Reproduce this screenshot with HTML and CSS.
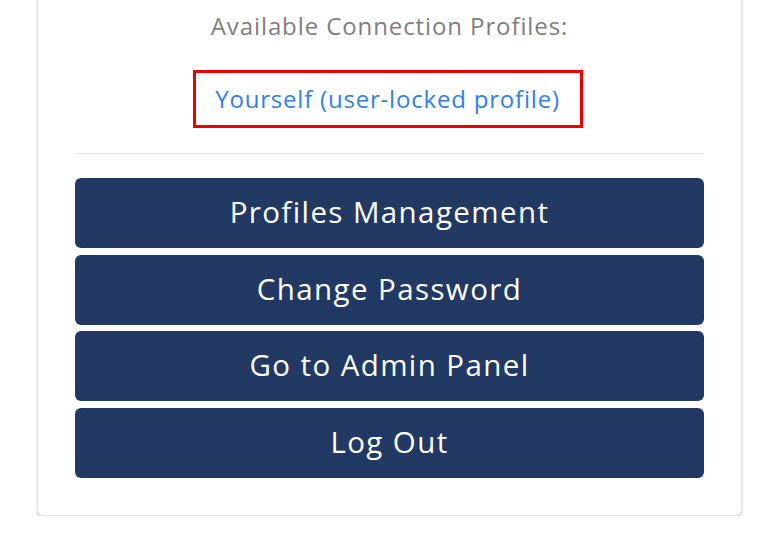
FILE: index.html
```html
<!DOCTYPE html>
<html>
<head>
<meta charset="utf-8">
<link rel="stylesheet" href="styles.css">
</head>
<body>
<div class="card">
  <div class="title">Available Connection Profiles:</div>
  <div class="profiles">
    <a class="profile" href="#">Yourself (user-locked profile)</a>
  </div>
  <hr class="divider">
  <div class="actions">
    <button class="btn">Profiles Management</button>
    <button class="btn">Change Password</button>
    <button class="btn">Go to Admin Panel</button>
    <button class="btn">Log Out</button>
  </div>
</div>
</body>
</html>
```

FILE: styles.css
```css
html, body {
  margin: 0;
  padding: 0;
  background: #ffffff;
}
body {
  font-family: "Open Sans", "Noto Sans", sans-serif;
}
.card {
  box-sizing: border-box;
  width: 705px;
  margin: -10px 0 0 37px;
  padding: 20px 37px 37px;
  border: 1px solid #e4e4e4;
  border-top: none;
  border-radius: 0 0 6px 6px;
  box-shadow: 0 2px 3px rgba(0,0,0,0.18);
  background: #fff;
}
.title {
  text-align: center;
  color: #857d7d;
  font-size: 24px;
  letter-spacing: 0.9px;
  line-height: 32px;
}
.profiles {
  display: flex;
  justify-content: center;
  margin-top: 28px;
  padding-right: 4px;
}
.profile {
  display: block;
  box-sizing: border-box;
  width: 390px;
  height: 58px;
  border: 3px solid #ee0000;
  color: #2f80ed;
  text-decoration: none;
  font-size: 24px;
  letter-spacing: 0.8px;
  line-height: 52px;
  text-align: center;
}
.divider {
  border: none;
  border-top: 1px solid #e3e3e3;
  margin: 25px 0 24px;
}
.actions {
  display: flex;
  flex-direction: column;
  gap: 6.5px;
}
.btn {
  height: 70px;
  border: none;
  border-radius: 6px;
  background: #213963;
  color: #fff;
  font-family: "Open Sans", "Noto Sans", sans-serif;
  font-size: 29.5px;
  letter-spacing: 1.4px;
  padding: 0 0 3px;
}
```
